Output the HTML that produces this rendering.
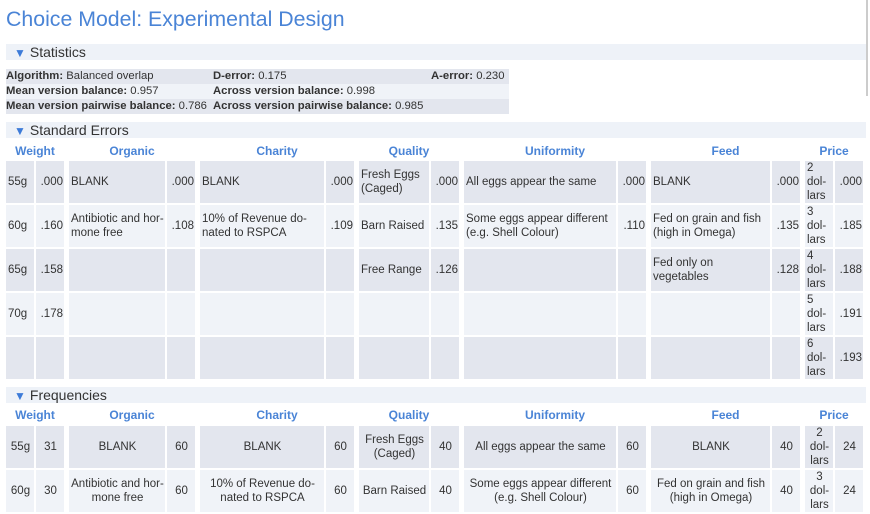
<!DOCTYPE html>
<html><head><meta charset="utf-8"><style>
html,body{margin:0;padding:0;width:870px;height:482px;overflow:hidden;background:#fff;font-family:"Liberation Sans",sans-serif;color:#333}
.title{position:absolute;left:6px;top:7px;font-size:21.3px;color:#4a84d6;white-space:nowrap}
.sec{position:absolute;left:6px;width:860px;height:16px;background:#eef2f8;font-size:14px;line-height:16px}
.sec span{color:#3d7bd8;font-size:12px;margin:0 4px 0 8px}
.stats{position:absolute;left:6px;top:69px;border-collapse:collapse;font-size:11.3px}
.stats td{height:15px;padding:0 1px 0 0;white-space:nowrap;line-height:15px}
.stats tr.g td{background:#e3e6ee}
.stats tr.l td{background:#f0f3f8}
b{font-weight:bold}
table.g{position:absolute;left:4px;border-collapse:separate;border-spacing:2px;table-layout:fixed;font-size:11.5px}
table.g td{padding:0 1px 0 2px;line-height:14px;overflow:hidden;vertical-align:middle}
table.g th{color:#4a84d6;font-weight:bold;font-size:12px;height:16px;padding:0;text-align:center}
table.g tr.a td{background:#e3e6ee;height:41px}
table.g tr.b td{background:#f0f3f8;height:41px}
table.g td.s{background:transparent!important;padding:0}
table.g td.n{text-align:right}
table.f td{text-align:center}
.sb{position:absolute;left:866px;top:0;width:2px;height:96px;background:#ccc}
</style></head><body>
<div class="title">Choice Model: Experimental Design</div>
<div class="sb"></div>
<div class="sec" style="top:44px"><span>▼</span>Statistics</div>
<table class="stats">
<tr class="g"><td style="width:206px"><b>Algorithm:</b> Balanced overlap</td><td style="width:217px"><b>D-error:</b> 0.175</td><td style="width:77px"><b>A-error:</b> 0.230</td></tr>
<tr class="l"><td><b>Mean version balance:</b> 0.957</td><td><b>Across version balance:</b> 0.998</td><td></td></tr>
<tr class="g"><td><b>Mean version pairwise balance:</b> 0.786</td><td><b>Across version pairwise balance:</b> 0.985</td><td></td></tr>
</table>
<div class="sec" style="top:122px"><span>▼</span>Standard Errors</div>
<table class="g" style="top:141px">
<colgroup><col style="width:28px"><col style="width:28px"><col style="width:1px"><col style="width:96px"><col style="width:28px"><col style="width:1px"><col style="width:124px"><col style="width:28px"><col style="width:1px"><col style="width:70px"><col style="width:28px"><col style="width:1px"><col style="width:152px"><col style="width:28px"><col style="width:1px"><col style="width:119px"><col style="width:28px"><col style="width:1px"><col style="width:28px"><col style="width:28px"></colgroup>
<tr><th colspan="2">Weight</th><th></th><th colspan="2">Organic</th><th></th><th colspan="2">Charity</th><th></th><th colspan="2">Quality</th><th></th><th colspan="2">Uniformity</th><th></th><th colspan="2">Feed</th><th></th><th colspan="2">Price</th></tr>
<tr class="a"><td>55g</td><td class="n">.000</td><td class="s"></td><td>BLANK</td><td class="n">.000</td><td class="s"></td><td>BLANK</td><td class="n">.000</td><td class="s"></td><td>Fresh Eggs (Caged)</td><td class="n">.000</td><td class="s"></td><td>All eggs appear the same</td><td class="n">.000</td><td class="s"></td><td>BLANK</td><td class="n">.000</td><td class="s"></td><td>2<br>dol-<br>lars</td><td class="n">.000</td></tr>
<tr class="b"><td>60g</td><td class="n">.160</td><td class="s"></td><td>Antibiotic and hor-mone free</td><td class="n">.108</td><td class="s"></td><td>10% of Revenue do-nated to RSPCA</td><td class="n">.109</td><td class="s"></td><td>Barn Raised</td><td class="n">.135</td><td class="s"></td><td>Some eggs appear different (e.g. Shell Colour)</td><td class="n">.110</td><td class="s"></td><td>Fed on grain and fish (high in Omega)</td><td class="n">.135</td><td class="s"></td><td>3<br>dol-<br>lars</td><td class="n">.185</td></tr>
<tr class="a"><td>65g</td><td class="n">.158</td><td class="s"></td><td></td><td></td><td class="s"></td><td></td><td></td><td class="s"></td><td>Free Range</td><td class="n">.126</td><td class="s"></td><td></td><td></td><td class="s"></td><td>Fed only on vegetables</td><td class="n">.128</td><td class="s"></td><td>4<br>dol-<br>lars</td><td class="n">.188</td></tr>
<tr class="b"><td>70g</td><td class="n">.178</td><td class="s"></td><td></td><td></td><td class="s"></td><td></td><td></td><td class="s"></td><td></td><td></td><td class="s"></td><td></td><td></td><td class="s"></td><td></td><td></td><td class="s"></td><td>5<br>dol-<br>lars</td><td class="n">.191</td></tr>
<tr class="a"><td></td><td></td><td class="s"></td><td></td><td></td><td class="s"></td><td></td><td></td><td class="s"></td><td></td><td></td><td class="s"></td><td></td><td></td><td class="s"></td><td></td><td></td><td class="s"></td><td>6<br>dol-<br>lars</td><td class="n">.193</td></tr>
</table>
<div class="sec" style="top:387px"><span>▼</span>Frequencies</div>
<table class="g f" style="top:404px">
<colgroup><col style="width:28px"><col style="width:28px"><col style="width:1px"><col style="width:96px"><col style="width:28px"><col style="width:1px"><col style="width:124px"><col style="width:28px"><col style="width:1px"><col style="width:70px"><col style="width:28px"><col style="width:1px"><col style="width:152px"><col style="width:28px"><col style="width:1px"><col style="width:119px"><col style="width:28px"><col style="width:1px"><col style="width:28px"><col style="width:28px"></colgroup>
<tr><th colspan="2" style="height:18px">Weight</th><th></th><th colspan="2">Organic</th><th></th><th colspan="2">Charity</th><th></th><th colspan="2">Quality</th><th></th><th colspan="2">Uniformity</th><th></th><th colspan="2">Feed</th><th></th><th colspan="2">Price</th></tr>
<tr class="a"><td>55g</td><td>31</td><td class="s"></td><td>BLANK</td><td>60</td><td class="s"></td><td>BLANK</td><td>60</td><td class="s"></td><td>Fresh Eggs (Caged)</td><td>40</td><td class="s"></td><td>All eggs appear the same</td><td>60</td><td class="s"></td><td>BLANK</td><td>40</td><td class="s"></td><td>2<br>dol-<br>lars</td><td>24</td></tr>
<tr class="b"><td>60g</td><td>30</td><td class="s"></td><td>Antibiotic and hor-mone free</td><td>60</td><td class="s"></td><td>10% of Revenue do-nated to RSPCA</td><td>60</td><td class="s"></td><td>Barn Raised</td><td>40</td><td class="s"></td><td>Some eggs appear different (e.g. Shell Colour)</td><td>60</td><td class="s"></td><td>Fed on grain and fish (high in Omega)</td><td>40</td><td class="s"></td><td>3<br>dol-<br>lars</td><td>24</td></tr>
</table>
</body></html>
